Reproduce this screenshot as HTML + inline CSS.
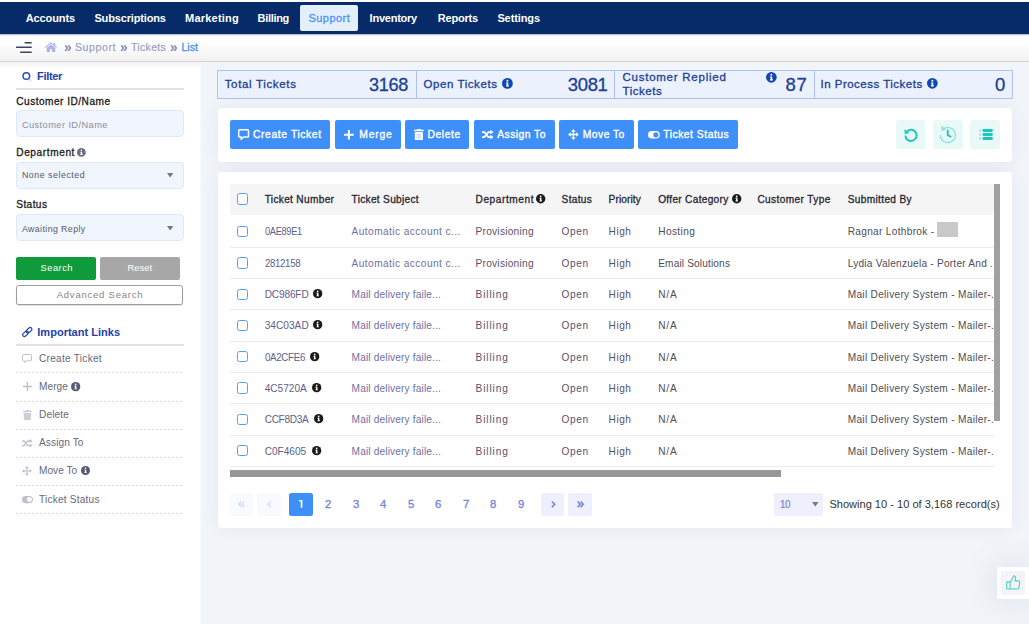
<!DOCTYPE html>
<html>
<head>
<meta charset="utf-8">
<title>Support Tickets List</title>
<style>
*{box-sizing:border-box;margin:0;padding:0}
html,body{width:1029px;height:624px;overflow:hidden}
body{font-family:"Liberation Sans", sans-serif;background:#f1f4f8;position:relative;color:#333}
.a{position:absolute;white-space:nowrap;display:block}
svg.a{overflow:visible}
</style>
</head>
<body>
<div class="a" style="left:0px;top:0px;width:1029px;height:2px;background:#fff;"></div>
<div class="a" style="left:0px;top:2px;width:1029px;height:32px;background:#072b69;"></div>
<div class="a" style="left:299.7px;top:5.4px;width:58.3px;height:25.6px;background:#e4effc;border-radius:2px"></div>
<div class="a" style="left:0;top:34px;width:1029px;height:28px;background:linear-gradient(#8d9cbf 0,#e9ebf1 1px,#fff 2.5px,#fff 30%,#f2f2f3 100%);border-bottom:1px solid #d4d4d6"></div>
<svg class="a" style="left:16px;top:41.8px" width="16" height="11" viewBox="0 0 16 11"><g fill="#3b4262"><rect x="8.5" y="0" width="7.3" height="1.6" rx=".5"/><rect x="0" y="4.5" width="15.8" height="1.6" rx=".5"/><rect x="4.1" y="9.5" width="11.7" height="1.5" rx=".5"/></g></svg>
<svg class="a" style="left:45.2px;top:42.4px" width="12" height="10" viewBox="0 0 12 10"><path d="M6 0.2L0.1 5.1L0.8 5.9L6 1.6L11.2 5.9L11.9 5.1L10.2 3.7V0.8H8.9V2.6Z" fill="#aab1e6"/><path d="M6 2.5L1.8 6V9.9H4.9V7H7.1V9.9H10.2V6Z" fill="#aab1e6"/></svg>
<div class="a" style="left:0;top:62px;width:200px;height:562px;background:linear-gradient(#f4f4f6 0,#fff 7px)"></div>
<div class="a" style="left:200px;top:62px;width:1.5px;height:562px;background:#f6f7fa;"></div>
<svg class="a" style="left:21.6px;top:72px" width="10" height="10" viewBox="0 0 10 10"><circle cx="4.35" cy="4.0" r="3.3" fill="none" stroke="#2450b8" stroke-width="1.5"/><path d="M6.9 6.6L9 8.7" stroke="#9db0e4" stroke-width="1"/></svg>
<div class="a" style="left:16.25px;top:88px;width:167.75px;height:1.6px;background:#e3e3e3;"></div>
<div class="a" style="left:16.25px;top:110.3px;width:167.5px;height:26.7px;background:#f0f5fe;border:1px solid #dfe8f8;border-radius:4px"></div>
<div class="a" style="left:16.25px;top:162px;width:167.5px;height:26.6px;background:#f0f5fe;border:1px solid #dfe8f8;border-radius:4px"></div>
<div class="a" style="left:16.25px;top:214.3px;width:167.5px;height:26.3px;background:#f0f5fe;border:1px solid #dfe8f8;border-radius:4px"></div>
<div class="a" style="left:16.25px;top:257.2px;width:80.0px;height:23.3px;background:#0f9b3c;border-radius:2px"></div>
<div class="a" style="left:100px;top:257.2px;width:80px;height:23.3px;background:#a7a7a7;border-radius:2px"></div>
<div class="a" style="left:16.25px;top:285.1px;width:166.8px;height:20.4px;background:#fff;border:1px solid #9c9c9c;border-radius:2.5px;box-shadow:0 1px 1px rgba(0,0,0,.12)"></div>
<svg class="a" style="left:21.5px;top:327.2px" width="10.6" height="10" viewBox="0 0 10.6 10"><g fill="none" stroke="#1f44ad" stroke-width="1.15"><rect x="-3.2" y="-1.75" width="6.4" height="3.5" rx="1.75" transform="translate(7.05 3.25) rotate(-40)"/><rect x="-3.2" y="-1.75" width="6.4" height="3.5" rx="1.75" transform="translate(3.55 6.75) rotate(-40)"/></g></svg>
<div class="a" style="left:16.25px;top:344px;width:167.75px;height:1.6px;background:#e3e3e3;"></div>
<svg class="a" style="left:22.3px;top:353.8px" width="10" height="9" viewBox="0 0 10 9"><path d="M1.3 0.5H8.7A0.8 0.8 0 0 1 9.5 1.3V6A0.8 0.8 0 0 1 8.7 6.8H4.6L2.6 8.5V6.8H1.3A0.8 0.8 0 0 1 0.5 6V1.3A0.8 0.8 0 0 1 1.3 0.5Z" fill="none" stroke="#bfc0cc" stroke-width="1"/></svg>
<div class="a" style="left:16.25px;top:372.1px;width:167.7px;height:1px;background:repeating-linear-gradient(90deg,#d9d9d9 0,#d9d9d9 2.2px,transparent 2.2px,transparent 4px)"></div>
<svg class="a" style="left:22.5px;top:382px" width="8.8" height="9" viewBox="0 0 8.8 9"><path d="M4.4 0V9M0 4.5H8.8" stroke="#bfc0cc" stroke-width="1.5"/></svg>
<div class="a" style="left:16.25px;top:400.5px;width:167.7px;height:1px;background:repeating-linear-gradient(90deg,#d9d9d9 0,#d9d9d9 2.2px,transparent 2.2px,transparent 4px)"></div>
<svg class="a" style="left:22.5px;top:409.7px" width="8.8" height="10.3" viewBox="0 0 8.8 10.3"><path d="M3 0H5.8L6.3 0.7H8.8V1.9H0V0.7H2.5Z M0.6 2.7H8.2L7.8 9.5A0.9 0.9 0 0 1 6.9 10.3H1.9A0.9 0.9 0 0 1 1 9.5Z" fill="#cdced9"/></svg>
<div class="a" style="left:16.25px;top:428.7px;width:167.7px;height:1px;background:repeating-linear-gradient(90deg,#d9d9d9 0,#d9d9d9 2.2px,transparent 2.2px,transparent 4px)"></div>
<svg class="a" style="left:22.3px;top:438.5px" width="10.6" height="8.6" viewBox="0 0 11.5 9.2"><g fill="none" stroke="#bfc0cc" stroke-width="1.5"><path d="M0 2.1H2.4L6.3 7.1H9"/><path d="M0 7.1H2.4L6.3 2.1H9"/></g><path d="M8.4 0L11.5 2.1L8.4 4.2Z M8.4 5L11.5 7.1L8.4 9.2Z" fill="#bfc0cc"/></svg>
<div class="a" style="left:16.25px;top:457.1px;width:167.7px;height:1px;background:repeating-linear-gradient(90deg,#d9d9d9 0,#d9d9d9 2.2px,transparent 2.2px,transparent 4px)"></div>
<svg class="a" style="left:22.4px;top:466.1px" width="9.9" height="9.9" viewBox="0 0 11 11"><path d="M5.5 0L7.7 2.6H6.1V4.9H8.4V3.3L11 5.5L8.4 7.7V6.1H6.1V8.4H7.7L5.5 11L3.3 8.4H4.9V6.1H2.6V7.7L0 5.5L2.6 3.3V4.9H4.9V2.6H3.3Z" fill="#bfc0cc"/></svg>
<div class="a" style="left:16.25px;top:484.9px;width:167.7px;height:1px;background:repeating-linear-gradient(90deg,#d9d9d9 0,#d9d9d9 2.2px,transparent 2.2px,transparent 4px)"></div>
<svg class="a" style="left:22.3px;top:495.6px" width="11" height="7.2" viewBox="0 0 11 7.2"><rect x="0" y="0" width="11" height="7.2" rx="3.6" fill="#bfc0cc"/><circle cx="7.4" cy="3.6" r="2.5" fill="#fff"/></svg>
<div class="a" style="left:16.25px;top:513px;width:167.7px;height:1px;background:repeating-linear-gradient(90deg,#d9d9d9 0,#d9d9d9 2.2px,transparent 2.2px,transparent 4px)"></div>
<div class="a" style="left:217.2px;top:70px;width:199.4px;height:28.7px;background:#ebf1fd;border:1px solid #afc1f2"></div>
<div class="a" style="left:415.8px;top:70px;width:199.2px;height:28.7px;background:#ebf1fd;border:1px solid #afc1f2"></div>
<div class="a" style="left:614.2px;top:70px;width:200.6px;height:28.7px;background:#ebf1fd;border:1px solid #afc1f2"></div>
<div class="a" style="left:814px;top:70px;width:198.5px;height:28.7px;background:#ebf1fd;border:1px solid #afc1f2"></div>
<div class="a" style="left:217.8px;top:108px;width:794.5px;height:54px;background:#fff;border-radius:4px;box-shadow:0 0 18px rgba(70,80,110,.07)"></div>
<div class="a" style="left:230.2px;top:120px;width:99.9px;height:29.4px;background:#3f8ff8;border-radius:2px"></div>
<div class="a" style="left:335.1px;top:120px;width:65.7px;height:29.4px;background:#3f8ff8;border-radius:2px"></div>
<div class="a" style="left:405px;top:120px;width:64.2px;height:29.4px;background:#3f8ff8;border-radius:2px"></div>
<div class="a" style="left:473.7px;top:120px;width:80.9px;height:29.4px;background:#3f8ff8;border-radius:2px"></div>
<div class="a" style="left:559.3px;top:120px;width:74.7px;height:29.4px;background:#3f8ff8;border-radius:2px"></div>
<div class="a" style="left:638.2px;top:120px;width:99.7px;height:29.4px;background:#3f8ff8;border-radius:2px"></div>
<div class="a" style="left:895.8px;top:120px;width:29.2px;height:29.4px;background:#e8f9f7;border-radius:3px"></div>
<div class="a" style="left:933.3px;top:120px;width:29.7px;height:29.4px;background:#e8f9f7;border-radius:3px"></div>
<div class="a" style="left:970.4px;top:120px;width:29.6px;height:29.4px;background:#e8f9f7;border-radius:3px"></div>
<div class="a" style="left:217.8px;top:172.2px;width:794.5px;height:355.4px;background:#fff;border-radius:4px;box-shadow:0 0 18px rgba(70,80,110,.07)"></div>
<div class="a" style="left:230.2px;top:184.2px;width:763.6px;height:30.6px;background:#f5f5f5;"></div>
<div class="a" style="left:237.2px;top:193.45px;width:11.3px;height:11.3px;background:#fff;border:1.3px solid #5a9cf5;border-radius:2.5px"></div>
<div class="a" style="left:237.2px;top:225.95px;width:11.3px;height:11.3px;background:#fff;border:1.3px solid #5a9cf5;border-radius:2.5px"></div>
<div class="a" style="left:936.8px;top:222.2px;width:21.2px;height:14.5px;background:#c9c9c9;"></div>
<div class="a" style="left:230.2px;top:246.7px;width:763.6px;height:1.0px;background:#ececec;"></div>
<div class="a" style="left:237.2px;top:257.25px;width:11.3px;height:11.3px;background:#fff;border:1.3px solid #5a9cf5;border-radius:2.5px"></div>
<div class="a" style="left:230.2px;top:278.0px;width:763.6px;height:1.0px;background:#ececec;"></div>
<div class="a" style="left:237.2px;top:288.55px;width:11.3px;height:11.3px;background:#fff;border:1.3px solid #5a9cf5;border-radius:2.5px"></div>
<div class="a" style="left:230.2px;top:309.3px;width:763.6px;height:1.0px;background:#ececec;"></div>
<div class="a" style="left:237.2px;top:319.85px;width:11.3px;height:11.3px;background:#fff;border:1.3px solid #5a9cf5;border-radius:2.5px"></div>
<div class="a" style="left:230.2px;top:340.6px;width:763.6px;height:1.0px;background:#ececec;"></div>
<div class="a" style="left:237.2px;top:351.15px;width:11.3px;height:11.3px;background:#fff;border:1.3px solid #5a9cf5;border-radius:2.5px"></div>
<div class="a" style="left:230.2px;top:371.9px;width:763.6px;height:1.0px;background:#ececec;"></div>
<div class="a" style="left:237.2px;top:382.45px;width:11.3px;height:11.3px;background:#fff;border:1.3px solid #5a9cf5;border-radius:2.5px"></div>
<div class="a" style="left:230.2px;top:403.2px;width:763.6px;height:1.0px;background:#ececec;"></div>
<div class="a" style="left:237.2px;top:413.75px;width:11.3px;height:11.3px;background:#fff;border:1.3px solid #5a9cf5;border-radius:2.5px"></div>
<div class="a" style="left:230.2px;top:434.5px;width:763.6px;height:1.0px;background:#ececec;"></div>
<div class="a" style="left:237.2px;top:445.05px;width:11.3px;height:11.3px;background:#fff;border:1.3px solid #5a9cf5;border-radius:2.5px"></div>
<div class="a" style="left:230.2px;top:465.8px;width:763.6px;height:1.0px;background:#ececec;"></div>
<div class="a" style="left:993.8px;top:184.2px;width:6.0px;height:236.6px;background:#a1a1a1;"></div>
<div class="a" style="left:230.2px;top:470.2px;width:550.4px;height:6.4px;background:#979797;"></div>
<div class="a" style="left:230.2px;top:493.2px;width:22.6px;height:22.6px;background:#f9faff;border-radius:2px"></div>
<div class="a" style="left:257.2px;top:493.2px;width:23.7px;height:22.6px;background:#f9faff;border-radius:2px"></div>
<div class="a" style="left:289.2px;top:493.2px;width:23.4px;height:22.6px;background:#3f8ff8;border-radius:2.5px"></div>
<div class="a" style="left:541.1px;top:493.2px;width:23.0px;height:22.6px;background:#eef0fe;border-radius:2px"></div>
<div class="a" style="left:568.4px;top:493.2px;width:23.2px;height:22.6px;background:#eef0fe;border-radius:2px"></div>
<div class="a" style="left:774.3px;top:493.2px;width:48.8px;height:22.8px;background:#eef0fe;border-radius:2px"></div>
<div class="a" style="left:997.1px;top:567px;width:32px;height:32px;background:#fff;border-radius:2px 0 0 2px;box-shadow:0 0 28px 6px rgba(120,125,160,.10)"></div>
<div class="a" style="left:1001.1px;top:571px;width:23.8px;height:24px;background:#f3f3f8;border-radius:2.5px"></div>
<span class="a t" style="left:25.70px;top:13.03px;font-size:11.04px;line-height:11.04px;color:#fff;letter-spacing:-0.118px;font-weight:bold">Accounts</span>
<span class="a t" style="left:94.40px;top:13.03px;font-size:11.04px;line-height:11.04px;color:#fff;letter-spacing:-0.168px;font-weight:bold">Subscriptions</span>
<span class="a t" style="left:185.00px;top:13.03px;font-size:11.04px;line-height:11.04px;color:#fff;letter-spacing:0.205px;font-weight:bold">Marketing</span>
<span class="a t" style="left:257.50px;top:13.03px;font-size:11.04px;line-height:11.04px;color:#fff;letter-spacing:-0.311px;font-weight:bold">Billing</span>
<span class="a t" style="left:308.50px;top:13.03px;font-size:11.04px;line-height:11.04px;color:#4c92f2;letter-spacing:0.438px;-webkit-text-stroke:0.3px #4c92f2">Support</span>
<span class="a t" style="left:369.60px;top:13.03px;font-size:11.04px;line-height:11.04px;color:#fff;letter-spacing:-0.252px;font-weight:bold">Inventory</span>
<span class="a t" style="left:437.70px;top:13.03px;font-size:11.04px;line-height:11.04px;color:#fff;letter-spacing:-0.191px;font-weight:bold">Reports</span>
<span class="a t" style="left:497.40px;top:13.03px;font-size:11.04px;line-height:11.04px;color:#fff;letter-spacing:-0.126px;font-weight:bold">Settings</span>
<span class="a t" style="left:63.70px;top:39.03px;font-size:15px;line-height:15px;color:#8089bd;transform:scaleX(0.9000);transform-origin:0 0;font-weight:bold">»</span>
<span class="a t" style="left:75.00px;top:43.03px;font-size:10.49px;line-height:10.49px;color:#99a0c2;letter-spacing:0.632px;-webkit-text-stroke:0.2px #99a0c2">Support</span>
<span class="a t" style="left:120.00px;top:39.03px;font-size:15px;line-height:15px;color:#8089bd;transform:scaleX(0.9000);transform-origin:0 0;font-weight:bold">»</span>
<span class="a t" style="left:131.00px;top:43.03px;font-size:10.49px;line-height:10.49px;color:#99a0c2;letter-spacing:0.338px;-webkit-text-stroke:0.2px #99a0c2">Tickets</span>
<span class="a t" style="left:170.00px;top:39.03px;font-size:15px;line-height:15px;color:#8089bd;transform:scaleX(0.9000);transform-origin:0 0;font-weight:bold">»</span>
<span class="a t" style="left:181.50px;top:43.03px;font-size:10.49px;line-height:10.49px;color:#4f8ff5;letter-spacing:0.033px;-webkit-text-stroke:0.3px #4f8ff5">List</span>
<span class="a t" style="left:37.10px;top:71.03px;font-size:11.04px;line-height:11.04px;color:#1d42ab;letter-spacing:-0.350px;font-weight:bold">Filter</span>
<span class="a t" style="left:16.25px;top:97.03px;font-size:10.12px;line-height:10.12px;color:#1b1b1b;letter-spacing:0.484px;-webkit-text-stroke:0.3px #1b1b1b">Customer ID/Name</span>
<span class="a t" style="left:21.90px;top:121.03px;font-size:9.29px;line-height:9.29px;color:#8b8f9b;letter-spacing:0.409px">Customer ID/Name</span>
<span class="a t" style="left:16.25px;top:148.03px;font-size:10.12px;line-height:10.12px;color:#1b1b1b;letter-spacing:0.593px;-webkit-text-stroke:0.3px #1b1b1b">Department</span>
<span class="a t" style="left:21.90px;top:171.03px;font-size:8.83px;line-height:8.83px;color:#555a66;letter-spacing:0.531px">None selected</span>
<span class="a t" style="left:16.25px;top:200.03px;font-size:10.12px;line-height:10.12px;color:#1b1b1b;letter-spacing:0.409px;-webkit-text-stroke:0.3px #1b1b1b">Status</span>
<span class="a t" style="left:21.90px;top:225.03px;font-size:8.83px;line-height:8.83px;color:#555a66;letter-spacing:0.391px">Awaiting Reply</span>
<span class="a t" style="left:40.60px;top:264.03px;font-size:9.38px;line-height:9.38px;color:#fff;letter-spacing:0.442px">Search</span>
<span class="a t" style="left:127.50px;top:264.03px;font-size:9.38px;line-height:9.38px;color:#fff;letter-spacing:0.029px">Reset</span>
<span class="a t" style="left:56.70px;top:290.03px;font-size:9.48px;line-height:9.48px;color:#868686;letter-spacing:0.794px">Advanced Search</span>
<span class="a t" style="left:37.30px;top:327.03px;font-size:11.04px;line-height:11.04px;color:#1d42ab;font-weight:bold">Important Links</span>
<span class="a t" style="left:39.00px;top:354.03px;font-size:10.12px;line-height:10.12px;color:#67687a;letter-spacing:0.256px">Create Ticket</span>
<span class="a t" style="left:39.00px;top:382.03px;font-size:10.12px;line-height:10.12px;color:#67687a;letter-spacing:0.067px">Merge</span>
<span class="a t" style="left:39.00px;top:410.03px;font-size:10.12px;line-height:10.12px;color:#67687a;letter-spacing:0.120px">Delete</span>
<span class="a t" style="left:39.00px;top:438.03px;font-size:10.12px;line-height:10.12px;color:#67687a;letter-spacing:0.099px">Assign To</span>
<span class="a t" style="left:39.00px;top:466.03px;font-size:10.12px;line-height:10.12px;color:#67687a;letter-spacing:0.020px">Move To</span>
<span class="a t" style="left:39.00px;top:495.03px;font-size:10.12px;line-height:10.12px;color:#67687a;letter-spacing:0.200px">Ticket Status</span>
<span class="a t" style="left:224.70px;top:79.02px;font-size:11.5px;line-height:11.5px;color:#1b3e96;letter-spacing:0.664px;-webkit-text-stroke:0.3px #1b3e96">Total Tickets</span>
<span class="a t" style="left:368.80px;top:76.03px;font-size:18.5px;line-height:18.5px;color:#1b3e96;letter-spacing:-0.350px;transform:scaleX(0.9795);transform-origin:0 0;-webkit-text-stroke:0.3px #1b3e96">3168</span>
<span class="a t" style="left:423.50px;top:79.02px;font-size:11.5px;line-height:11.5px;color:#1b3e96;letter-spacing:0.575px;-webkit-text-stroke:0.3px #1b3e96">Open Tickets</span>
<span class="a t" style="left:567.80px;top:76.03px;font-size:18.5px;line-height:18.5px;color:#1b3e96;letter-spacing:-0.350px;-webkit-text-stroke:0.3px #1b3e96">3081</span>
<span class="a t" style="left:622.50px;top:72.02px;font-size:11.5px;line-height:11.5px;color:#1b3e96;letter-spacing:0.750px;-webkit-text-stroke:0.3px #1b3e96">Customer Replied</span>
<span class="a t" style="left:622.50px;top:86.02px;font-size:11.5px;line-height:11.5px;color:#1b3e96;letter-spacing:0.543px;-webkit-text-stroke:0.3px #1b3e96">Tickets</span>
<span class="a t" style="left:785.60px;top:76.03px;font-size:18.5px;line-height:18.5px;color:#1b3e96;letter-spacing:0.711px;-webkit-text-stroke:0.3px #1b3e96">87</span>
<span class="a t" style="left:820.50px;top:79.02px;font-size:11.5px;line-height:11.5px;color:#1b3e96;letter-spacing:0.490px;-webkit-text-stroke:0.3px #1b3e96">In Process Tickets</span>
<span class="a t" style="left:995.00px;top:76.03px;font-size:18.5px;line-height:18.5px;color:#1b3e96;-webkit-text-stroke:0.3px #1b3e96">0</span>
<span class="a t" style="left:253.00px;top:130.04px;font-size:10.3px;line-height:10.3px;color:#fff;letter-spacing:0.618px;-webkit-text-stroke:0.35px #fff">Create Ticket</span>
<span class="a t" style="left:359.30px;top:130.04px;font-size:10.3px;line-height:10.3px;color:#fff;letter-spacing:0.810px;-webkit-text-stroke:0.35px #fff">Merge</span>
<span class="a t" style="left:427.50px;top:130.04px;font-size:10.3px;line-height:10.3px;color:#fff;letter-spacing:0.572px;-webkit-text-stroke:0.35px #fff">Delete</span>
<span class="a t" style="left:497.20px;top:130.04px;font-size:10.3px;line-height:10.3px;color:#fff;letter-spacing:0.473px;-webkit-text-stroke:0.35px #fff">Assign To</span>
<span class="a t" style="left:582.80px;top:130.04px;font-size:10.3px;line-height:10.3px;color:#fff;letter-spacing:0.469px;-webkit-text-stroke:0.35px #fff">Move To</span>
<span class="a t" style="left:663.20px;top:130.04px;font-size:10.3px;line-height:10.3px;color:#fff;letter-spacing:0.535px;-webkit-text-stroke:0.35px #fff">Ticket Status</span>
<span class="a t" style="left:264.70px;top:195.03px;font-size:10.12px;line-height:10.12px;color:#262633;letter-spacing:0.326px;-webkit-text-stroke:0.3px #262633">Ticket Number</span>
<span class="a t" style="left:351.60px;top:195.03px;font-size:10.12px;line-height:10.12px;color:#262633;letter-spacing:0.300px;-webkit-text-stroke:0.3px #262633">Ticket Subject</span>
<span class="a t" style="left:475.50px;top:195.03px;font-size:10.12px;line-height:10.12px;color:#262633;letter-spacing:0.577px;-webkit-text-stroke:0.3px #262633">Department</span>
<span class="a t" style="left:561.60px;top:195.03px;font-size:10.12px;line-height:10.12px;color:#262633;letter-spacing:0.319px;-webkit-text-stroke:0.3px #262633">Status</span>
<span class="a t" style="left:608.60px;top:195.03px;font-size:10.12px;line-height:10.12px;color:#262633;letter-spacing:0.114px;-webkit-text-stroke:0.3px #262633">Priority</span>
<span class="a t" style="left:658.20px;top:195.03px;font-size:10.12px;line-height:10.12px;color:#262633;letter-spacing:0.303px;-webkit-text-stroke:0.3px #262633">Offer Category</span>
<span class="a t" style="left:757.40px;top:195.03px;font-size:10.12px;line-height:10.12px;color:#262633;letter-spacing:0.390px;-webkit-text-stroke:0.3px #262633">Customer Type</span>
<span class="a t" style="left:847.70px;top:195.03px;font-size:10.12px;line-height:10.12px;color:#262633;letter-spacing:0.348px;-webkit-text-stroke:0.3px #262633">Submitted By</span>
<span class="a t" style="left:264.70px;top:227.03px;font-size:10.12px;line-height:10.12px;color:#5d5f8c;letter-spacing:-0.350px;transform:scaleX(0.9147);transform-origin:0 0">0AE89E1</span>
<span class="a t" style="left:351.60px;top:227.03px;font-size:10.12px;line-height:10.12px;color:#6d70a6;letter-spacing:0.441px">Automatic account c...</span>
<span class="a t" style="left:475.50px;top:227.03px;font-size:10.12px;line-height:10.12px;color:#5b4f69;letter-spacing:0.269px">Provisioning</span>
<span class="a t" style="left:561.60px;top:227.03px;font-size:10.12px;line-height:10.12px;color:#5b4f69;letter-spacing:0.564px">Open</span>
<span class="a t" style="left:608.60px;top:227.03px;font-size:10.12px;line-height:10.12px;color:#5b4f69;letter-spacing:0.510px">High</span>
<span class="a t" style="left:658.20px;top:227.03px;font-size:10.12px;line-height:10.12px;color:#4d4d55;letter-spacing:0.391px">Hosting</span>
<span class="a t" style="left:847.70px;top:227.03px;font-size:10.12px;line-height:10.12px;color:#4d4d55;letter-spacing:0.312px">Ragnar Lothbrok -</span>
<span class="a t" style="left:264.70px;top:259.03px;font-size:10.12px;line-height:10.12px;color:#5d5f8c;letter-spacing:-0.350px;transform:scaleX(0.9539);transform-origin:0 0">2812158</span>
<span class="a t" style="left:351.60px;top:259.03px;font-size:10.12px;line-height:10.12px;color:#6d70a6;letter-spacing:0.441px">Automatic account c...</span>
<span class="a t" style="left:475.50px;top:259.03px;font-size:10.12px;line-height:10.12px;color:#5b4f69;letter-spacing:0.269px">Provisioning</span>
<span class="a t" style="left:561.60px;top:259.03px;font-size:10.12px;line-height:10.12px;color:#5b4f69;letter-spacing:0.564px">Open</span>
<span class="a t" style="left:608.60px;top:259.03px;font-size:10.12px;line-height:10.12px;color:#5b4f69;letter-spacing:0.510px">High</span>
<span class="a t" style="left:658.20px;top:259.03px;font-size:10.12px;line-height:10.12px;color:#4d4d55;letter-spacing:0.149px">Email Solutions</span>
<span class="a t" style="left:847.70px;top:259.03px;font-size:10.12px;line-height:10.12px;color:#4d4d55;letter-spacing:0.230px">Lydia Valenzuela - Porter And .</span>
<span class="a t" style="left:264.70px;top:290.03px;font-size:10.12px;line-height:10.12px;color:#5d5f8c;letter-spacing:-0.157px">DC986FD</span>
<span class="a t" style="left:351.60px;top:290.03px;font-size:10.12px;line-height:10.12px;color:#6d70a6;letter-spacing:0.155px">Mail delivery faile...</span>
<span class="a t" style="left:475.50px;top:290.03px;font-size:10.12px;line-height:10.12px;color:#5b4f69;letter-spacing:0.900px">Billing</span>
<span class="a t" style="left:561.60px;top:290.03px;font-size:10.12px;line-height:10.12px;color:#5b4f69;letter-spacing:0.564px">Open</span>
<span class="a t" style="left:608.60px;top:290.03px;font-size:10.12px;line-height:10.12px;color:#5b4f69;letter-spacing:0.510px">High</span>
<span class="a t" style="left:658.20px;top:290.03px;font-size:10.12px;line-height:10.12px;color:#4d4d55;letter-spacing:0.845px">N/A</span>
<span class="a t" style="left:847.70px;top:290.03px;font-size:10.12px;line-height:10.12px;color:#4d4d55;letter-spacing:0.302px">Mail Delivery System - Mailer-.</span>
<span class="a t" style="left:264.70px;top:321.03px;font-size:10.12px;line-height:10.12px;color:#5d5f8c;letter-spacing:0.028px">34C03AD</span>
<span class="a t" style="left:351.60px;top:321.03px;font-size:10.12px;line-height:10.12px;color:#6d70a6;letter-spacing:0.155px">Mail delivery faile...</span>
<span class="a t" style="left:475.50px;top:321.03px;font-size:10.12px;line-height:10.12px;color:#5b4f69;letter-spacing:0.900px">Billing</span>
<span class="a t" style="left:561.60px;top:321.03px;font-size:10.12px;line-height:10.12px;color:#5b4f69;letter-spacing:0.564px">Open</span>
<span class="a t" style="left:608.60px;top:321.03px;font-size:10.12px;line-height:10.12px;color:#5b4f69;letter-spacing:0.510px">High</span>
<span class="a t" style="left:658.20px;top:321.03px;font-size:10.12px;line-height:10.12px;color:#4d4d55;letter-spacing:0.845px">N/A</span>
<span class="a t" style="left:847.70px;top:321.03px;font-size:10.12px;line-height:10.12px;color:#4d4d55;letter-spacing:0.302px">Mail Delivery System - Mailer-.</span>
<span class="a t" style="left:264.70px;top:353.03px;font-size:10.12px;line-height:10.12px;color:#5d5f8c;letter-spacing:-0.350px;transform:scaleX(0.9666);transform-origin:0 0">0A2CFE6</span>
<span class="a t" style="left:351.60px;top:353.03px;font-size:10.12px;line-height:10.12px;color:#6d70a6;letter-spacing:0.155px">Mail delivery faile...</span>
<span class="a t" style="left:475.50px;top:353.03px;font-size:10.12px;line-height:10.12px;color:#5b4f69;letter-spacing:0.900px">Billing</span>
<span class="a t" style="left:561.60px;top:353.03px;font-size:10.12px;line-height:10.12px;color:#5b4f69;letter-spacing:0.564px">Open</span>
<span class="a t" style="left:608.60px;top:353.03px;font-size:10.12px;line-height:10.12px;color:#5b4f69;letter-spacing:0.510px">High</span>
<span class="a t" style="left:658.20px;top:353.03px;font-size:10.12px;line-height:10.12px;color:#4d4d55;letter-spacing:0.845px">N/A</span>
<span class="a t" style="left:847.70px;top:353.03px;font-size:10.12px;line-height:10.12px;color:#4d4d55;letter-spacing:0.302px">Mail Delivery System - Mailer-.</span>
<span class="a t" style="left:264.70px;top:384.03px;font-size:10.12px;line-height:10.12px;color:#5d5f8c">4C5720A</span>
<span class="a t" style="left:351.60px;top:384.03px;font-size:10.12px;line-height:10.12px;color:#6d70a6;letter-spacing:0.155px">Mail delivery faile...</span>
<span class="a t" style="left:475.50px;top:384.03px;font-size:10.12px;line-height:10.12px;color:#5b4f69;letter-spacing:0.900px">Billing</span>
<span class="a t" style="left:561.60px;top:384.03px;font-size:10.12px;line-height:10.12px;color:#5b4f69;letter-spacing:0.564px">Open</span>
<span class="a t" style="left:608.60px;top:384.03px;font-size:10.12px;line-height:10.12px;color:#5b4f69;letter-spacing:0.510px">High</span>
<span class="a t" style="left:658.20px;top:384.03px;font-size:10.12px;line-height:10.12px;color:#4d4d55;letter-spacing:0.845px">N/A</span>
<span class="a t" style="left:847.70px;top:384.03px;font-size:10.12px;line-height:10.12px;color:#4d4d55;letter-spacing:0.302px">Mail Delivery System - Mailer-.</span>
<span class="a t" style="left:264.70px;top:415.03px;font-size:10.12px;line-height:10.12px;color:#5d5f8c;letter-spacing:-0.350px">CCF8D3A</span>
<span class="a t" style="left:351.60px;top:415.03px;font-size:10.12px;line-height:10.12px;color:#6d70a6;letter-spacing:0.155px">Mail delivery faile...</span>
<span class="a t" style="left:475.50px;top:415.03px;font-size:10.12px;line-height:10.12px;color:#5b4f69;letter-spacing:0.900px">Billing</span>
<span class="a t" style="left:561.60px;top:415.03px;font-size:10.12px;line-height:10.12px;color:#5b4f69;letter-spacing:0.564px">Open</span>
<span class="a t" style="left:608.60px;top:415.03px;font-size:10.12px;line-height:10.12px;color:#5b4f69;letter-spacing:0.510px">High</span>
<span class="a t" style="left:658.20px;top:415.03px;font-size:10.12px;line-height:10.12px;color:#4d4d55;letter-spacing:0.845px">N/A</span>
<span class="a t" style="left:847.70px;top:415.03px;font-size:10.12px;line-height:10.12px;color:#4d4d55;letter-spacing:0.302px">Mail Delivery System - Mailer-.</span>
<span class="a t" style="left:264.70px;top:447.03px;font-size:10.12px;line-height:10.12px;color:#5d5f8c;letter-spacing:-0.011px">C0F4605</span>
<span class="a t" style="left:351.60px;top:447.03px;font-size:10.12px;line-height:10.12px;color:#6d70a6;letter-spacing:0.155px">Mail delivery faile...</span>
<span class="a t" style="left:475.50px;top:447.03px;font-size:10.12px;line-height:10.12px;color:#5b4f69;letter-spacing:0.900px">Billing</span>
<span class="a t" style="left:561.60px;top:447.03px;font-size:10.12px;line-height:10.12px;color:#5b4f69;letter-spacing:0.564px">Open</span>
<span class="a t" style="left:608.60px;top:447.03px;font-size:10.12px;line-height:10.12px;color:#5b4f69;letter-spacing:0.510px">High</span>
<span class="a t" style="left:658.20px;top:447.03px;font-size:10.12px;line-height:10.12px;color:#4d4d55;letter-spacing:0.845px">N/A</span>
<span class="a t" style="left:847.70px;top:447.03px;font-size:10.12px;line-height:10.12px;color:#4d4d55;letter-spacing:0.302px">Mail Delivery System - Mailer-.</span>
<span class="a t" style="left:324.80px;top:499.03px;font-size:10.58px;line-height:10.58px;color:#7484d8;transform:scaleX(1.0667);transform-origin:0 0;-webkit-text-stroke:0.3px #7484d8">2</span>
<span class="a t" style="left:352.50px;top:499.03px;font-size:10.58px;line-height:10.58px;color:#7484d8;transform:scaleX(1.0667);transform-origin:0 0;-webkit-text-stroke:0.3px #7484d8">3</span>
<span class="a t" style="left:380.10px;top:499.03px;font-size:10.58px;line-height:10.58px;color:#7484d8;transform:scaleX(1.0667);transform-origin:0 0;-webkit-text-stroke:0.3px #7484d8">4</span>
<span class="a t" style="left:407.60px;top:499.03px;font-size:10.58px;line-height:10.58px;color:#7484d8;transform:scaleX(1.0667);transform-origin:0 0;-webkit-text-stroke:0.3px #7484d8">5</span>
<span class="a t" style="left:435.20px;top:499.03px;font-size:10.58px;line-height:10.58px;color:#7484d8;transform:scaleX(1.0667);transform-origin:0 0;-webkit-text-stroke:0.3px #7484d8">6</span>
<span class="a t" style="left:462.60px;top:499.03px;font-size:10.58px;line-height:10.58px;color:#7484d8;transform:scaleX(1.0667);transform-origin:0 0;-webkit-text-stroke:0.3px #7484d8">7</span>
<span class="a t" style="left:490.40px;top:499.03px;font-size:10.58px;line-height:10.58px;color:#7484d8;transform:scaleX(1.0667);transform-origin:0 0;-webkit-text-stroke:0.3px #7484d8">8</span>
<span class="a t" style="left:518.00px;top:499.03px;font-size:10.58px;line-height:10.58px;color:#7484d8;transform:scaleX(1.0667);transform-origin:0 0;-webkit-text-stroke:0.3px #7484d8">9</span>
<span class="a t" style="left:779.60px;top:499.03px;font-size:10.58px;line-height:10.58px;color:#7484d8;letter-spacing:-0.350px;transform:scaleX(0.9191);transform-origin:0 0;-webkit-text-stroke:0.2px #7484d8">10</span>
<span class="a t" style="left:829.40px;top:499.03px;font-size:11.04px;line-height:11.04px;color:#333;letter-spacing:0.013px">Showing 10 - 10 of 3,168 record(s)</span>
<svg class="a" style="left:77.4px;top:148.3px" width="8.8" height="8.8" viewBox="0 0 16 16"><circle cx="8" cy="8" r="8" fill="#6a6f82"/><circle cx="8" cy="4.1" r="1.45" fill="#fff"/><path d="M5.9 6.6H9.3V11H10.3V12.6H5.9V11H6.9V8.2H5.9Z" fill="#fff"/></svg>
<svg class="a" style="left:167px;top:172.5px" width="6.3" height="4.6" viewBox="0 0 10 7"><path d="M0 0H10L5 7Z" fill="#777"/></svg>
<svg class="a" style="left:167px;top:226.4px" width="6.3" height="4.6" viewBox="0 0 10 7"><path d="M0 0H10L5 7Z" fill="#777"/></svg>
<svg class="a" style="left:70.85px;top:382.0px" width="9.3" height="9.3" viewBox="0 0 16 16"><circle cx="8" cy="8" r="8" fill="#555a78"/><circle cx="8" cy="4.1" r="1.45" fill="#fff"/><path d="M5.9 6.6H9.3V11H10.3V12.6H5.9V11H6.9V8.2H5.9Z" fill="#fff"/></svg>
<svg class="a" style="left:80.7px;top:466.45px" width="9.0" height="9.0" viewBox="0 0 16 16"><circle cx="8" cy="8" r="8" fill="#555a78"/><circle cx="8" cy="4.1" r="1.45" fill="#fff"/><path d="M5.9 6.6H9.3V11H10.3V12.6H5.9V11H6.9V8.2H5.9Z" fill="#fff"/></svg>
<svg class="a" style="left:502.15px;top:78.2px" width="10.8" height="10.8" viewBox="0 0 16 16"><circle cx="8" cy="8" r="8" fill="#0f47b3"/><circle cx="8" cy="4.1" r="1.45" fill="#fff"/><path d="M5.9 6.6H9.3V11H10.3V12.6H5.9V11H6.9V8.2H5.9Z" fill="#fff"/></svg>
<svg class="a" style="left:766.35px;top:72.05px" width="10.7" height="10.7" viewBox="0 0 16 16"><circle cx="8" cy="8" r="8" fill="#0f47b3"/><circle cx="8" cy="4.1" r="1.45" fill="#fff"/><path d="M5.9 6.6H9.3V11H10.3V12.6H5.9V11H6.9V8.2H5.9Z" fill="#fff"/></svg>
<svg class="a" style="left:927.1px;top:78.25px" width="10.7" height="10.7" viewBox="0 0 16 16"><circle cx="8" cy="8" r="8" fill="#0f47b3"/><circle cx="8" cy="4.1" r="1.45" fill="#fff"/><path d="M5.9 6.6H9.3V11H10.3V12.6H5.9V11H6.9V8.2H5.9Z" fill="#fff"/></svg>
<svg class="a" style="left:238.2px;top:128.7px" width="11.2" height="11" viewBox="0 0 11.2 11"><path d="M1.6 0.7H9.6A0.9 0.9 0 0 1 10.5 1.6V7.2A0.9 0.9 0 0 1 9.6 8.1H5.4L3.2 10.2V8.1H1.6A0.9 0.9 0 0 1 0.7 7.2V1.6A0.9 0.9 0 0 1 1.6 0.7Z" fill="none" stroke="#fff" stroke-width="1.45" stroke-linejoin="round"/></svg>
<svg class="a" style="left:343.6px;top:129.9px" width="9.8" height="9.6" viewBox="0 0 9.8 9.6"><path d="M4.9 0V9.6M0 4.8H9.8" stroke="#fff" stroke-width="2.1"/></svg>
<svg class="a" style="left:414px;top:128.9px" width="9.7" height="11.1" viewBox="0 0 9.7 11.1"><path d="M3.1 0H6.6L7.1 0.8H9.7V2.2H0V0.8H2.6Z" fill="#fff"/><rect x="0.8" y="2.9" width="8.1" height="8.2" rx="0.9" fill="#fff"/><rect x="2.5" y="4.4" width="4.7" height="5.3" fill="#3f8ff8" opacity=".22"/></svg>
<svg class="a" style="left:482px;top:130.3px" width="11.5" height="9.2" viewBox="0 0 11.5 9.2"><g fill="none" stroke="#fff" stroke-width="1.75"><path d="M0 2.1H2.4L6.3 7.1H9"/><path d="M0 7.1H2.4L6.3 2.1H9"/></g><path d="M8.4 -0.2L11.5 2.1L8.4 4.4Z M8.4 4.8L11.5 7.1L8.4 9.4Z" fill="#fff"/></svg>
<svg class="a" style="left:568.1px;top:128.9px" width="10.8" height="11" viewBox="0 0 11 11"><path d="M5.5 0L7.8 2.7H6.15V4.85H8.3V3.2L11 5.5L8.3 7.8V6.15H6.15V8.3H7.8L5.5 11L3.2 8.3H4.85V6.15H2.7V7.8L0 5.5L2.7 3.2V4.85H4.85V2.7H3.2Z" fill="#fff"/></svg>
<svg class="a" style="left:647.5px;top:130.7px" width="11.8" height="7.6" viewBox="0 0 11.8 7.6"><rect x="0" y="0" width="11.8" height="7.6" rx="3.8" fill="#fff"/><circle cx="7.9" cy="3.8" r="2.6" fill="#3f8ff8"/></svg>
<svg class="a" style="left:903.7px;top:127.7px" width="14" height="14.4" viewBox="0 0 14 14.4"><path d="M3.1 3.3A5.6 5.6 0 1 1 1.4 7.6" fill="none" stroke="#1bc5bd" stroke-width="1.9"/><path d="M0.3 1.2L0.9 6.1L5.6 4.9Z" fill="#1bc5bd"/></svg>
<svg class="a" style="left:938.6px;top:124.6px" width="17.6" height="18.2" viewBox="0 0 17.6 18.2"><path d="M3.6 4.6A7.6 7.6 0 1 1 1.3 9.9" fill="none" stroke="#8fe3de" stroke-width="1.3"/><path d="M2.3 0.6L2.6 6.3L7.3 4.6Z" fill="#8fe3de"/><path d="M8.75 5.4V10.2L11.6 11.6" fill="none" stroke="#1bc5bd" stroke-width="1.8" stroke-linecap="round" stroke-linejoin="round"/></svg>
<svg class="a" style="left:978.6px;top:129.2px" width="13.8" height="11" viewBox="0 0 13.8 11"><g fill="#1bc5bd"><rect x="3.5" y="0" width="10.3" height="2.9" rx="1.1"/><rect x="3.5" y="4.05" width="10.3" height="2.9" rx="1.1"/><rect x="3.5" y="8.1" width="10.3" height="2.9" rx="1.1"/></g><g fill="#8fe3de"><rect x="0" y="0.5" width="2.1" height="1.9" rx=".6"/><rect x="0" y="4.55" width="2.1" height="1.9" rx=".6"/><rect x="0" y="8.6" width="2.1" height="1.9" rx=".6"/></g></svg>
<svg class="a" style="left:536.1px;top:194.4px" width="9.4" height="9.4" viewBox="0 0 16 16"><circle cx="8" cy="8" r="8" fill="#1a1a1a"/><circle cx="8" cy="4.1" r="1.45" fill="#fff"/><path d="M5.9 6.6H9.3V11H10.3V12.6H5.9V11H6.9V8.2H5.9Z" fill="#fff"/></svg>
<svg class="a" style="left:731.7px;top:194.4px" width="9.4" height="9.4" viewBox="0 0 16 16"><circle cx="8" cy="8" r="8" fill="#1a1a1a"/><circle cx="8" cy="4.1" r="1.45" fill="#fff"/><path d="M5.9 6.6H9.3V11H10.3V12.6H5.9V11H6.9V8.2H5.9Z" fill="#fff"/></svg>
<svg class="a" style="left:313.35px;top:289.15px" width="9.3" height="9.3" viewBox="0 0 16 16"><circle cx="8" cy="8" r="8" fill="#1a1a1a"/><circle cx="8" cy="4.1" r="1.45" fill="#fff"/><path d="M5.9 6.6H9.3V11H10.3V12.6H5.9V11H6.9V8.2H5.9Z" fill="#fff"/></svg>
<svg class="a" style="left:313.35px;top:320.45px" width="9.3" height="9.3" viewBox="0 0 16 16"><circle cx="8" cy="8" r="8" fill="#1a1a1a"/><circle cx="8" cy="4.1" r="1.45" fill="#fff"/><path d="M5.9 6.6H9.3V11H10.3V12.6H5.9V11H6.9V8.2H5.9Z" fill="#fff"/></svg>
<svg class="a" style="left:310.35px;top:351.75px" width="9.3" height="9.3" viewBox="0 0 16 16"><circle cx="8" cy="8" r="8" fill="#1a1a1a"/><circle cx="8" cy="4.1" r="1.45" fill="#fff"/><path d="M5.9 6.6H9.3V11H10.3V12.6H5.9V11H6.9V8.2H5.9Z" fill="#fff"/></svg>
<svg class="a" style="left:312.1px;top:383.05px" width="9.3" height="9.3" viewBox="0 0 16 16"><circle cx="8" cy="8" r="8" fill="#1a1a1a"/><circle cx="8" cy="4.1" r="1.45" fill="#fff"/><path d="M5.9 6.6H9.3V11H10.3V12.6H5.9V11H6.9V8.2H5.9Z" fill="#fff"/></svg>
<svg class="a" style="left:313.75px;top:414.35px" width="9.3" height="9.3" viewBox="0 0 16 16"><circle cx="8" cy="8" r="8" fill="#1a1a1a"/><circle cx="8" cy="4.1" r="1.45" fill="#fff"/><path d="M5.9 6.6H9.3V11H10.3V12.6H5.9V11H6.9V8.2H5.9Z" fill="#fff"/></svg>
<svg class="a" style="left:311.6px;top:445.65px" width="9.3" height="9.3" viewBox="0 0 16 16"><circle cx="8" cy="8" r="8" fill="#1a1a1a"/><circle cx="8" cy="4.1" r="1.45" fill="#fff"/><path d="M5.9 6.6H9.3V11H10.3V12.6H5.9V11H6.9V8.2H5.9Z" fill="#fff"/></svg>
<svg class="a" style="left:238.4px;top:500.9px" width="6.8" height="6.4" viewBox="0 0 6.8 6.4"><path d="M3.3 0.4L0.8 3.2L3.3 6M6.3 0.4L3.8 3.2L6.3 6" fill="none" stroke="#d2d6f3" stroke-width="1.35"/></svg>
<svg class="a" style="left:267px;top:500.9px" width="4.7" height="6.4" viewBox="0 0 4.7 6.4"><path d="M3.8 0.4L1.1 3.2L3.8 6" fill="none" stroke="#d2d6f3" stroke-width="1.35"/></svg>
<svg class="a" style="left:550.5px;top:500.7px" width="4.7" height="6.6" viewBox="0 0 4.7 6.6"><path d="M0.8 0.5L3.7 3.3L0.8 6.1" fill="none" stroke="#7484d8" stroke-width="1.6"/></svg>
<svg class="a" style="left:576.8px;top:500.7px" width="6.8" height="6.6" viewBox="0 0 6.8 6.6"><path d="M0.6 0.5L3.2 3.3L0.6 6.1M3.6 0.5L6.2 3.3L3.6 6.1" fill="none" stroke="#7484d8" stroke-width="1.6"/></svg>
<svg class="a" style="left:299px;top:500.4px" width="3.4" height="7.8" viewBox="0 0 3.4 7.8"><path d="M0 0H3.4V7.8H1.75V1.5H0Z" fill="#fff"/></svg>
<svg class="a" style="left:812.2px;top:502.1px" width="6.6" height="4.6" viewBox="0 0 10 7"><path d="M0 0H10L5 7Z" fill="#7a7a7a"/></svg>
<svg class="a" style="left:1005.8px;top:574.6px" width="14.4" height="14.8" viewBox="0 0 14.4 14.8"><g fill="none" stroke="#4ecdc0" stroke-width="1.05" stroke-linejoin="round"><rect x="0.7" y="6.9" width="3.4" height="7.2" rx=".6"/><path d="M4.1 7.4L7.9 0.8C9.4 0.8 9.9 2.2 9.5 3.6L9 5.9H12.4C13.3 5.9 13.8 6.7 13.7 7.5L12.9 12.6C12.8 13.5 12.2 14.1 11.3 14.1H4.1"/></g></svg>
</body>
</html>
